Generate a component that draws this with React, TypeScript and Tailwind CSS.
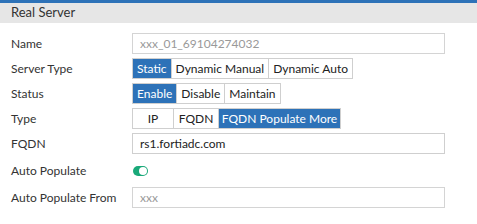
import React, { useState } from 'react';

const Seg = ({ items, active, widths }: { items: string[]; active: number; widths?: string[] }) => (
    <div className="flex h-[21px] border border-[#cfcfcf] whitespace-nowrap">
        {items.map((it, i) => (
            <div
                key={it}
                className={`flex items-center justify-center px-[4px] ${i > 0 ? 'border-l border-[#cfcfcf]' : ''} ${widths ? widths[i] : ''} ${i === active ? 'bg-[#2d72b8] text-white' : 'bg-white text-[#222]'}`}
            >
                {it}
            </div>
        ))}
    </div>
);

const Row = ({ label, h = 'h-[21px]', children }: { label: string; h?: string; children: React.ReactNode }) => (
    <div className={`flex items-center ${h}`}>
        <div className="w-[132px] pl-[11px] text-[#333] whitespace-nowrap">{label}</div>
        {children}
    </div>
);

export default function App() {
    const [auto, setAuto] = useState(true);
    return (
        <div className="w-[477px] h-[224px] bg-white text-[12px] font-['Lato','Liberation_Sans',sans-serif] overflow-hidden">
            <div className="border-t-[3px] border-[#2d72b8] bg-[#e6e6e6] h-[23px] flex items-center pl-[11px] text-[13px] text-[#333]">
                Real Server
            </div>
            <div className="flex flex-col gap-[4px] pt-[10px]">
                <Row label="Name">
                    <div className="w-[313px] h-[21px] border border-[#d4d4d4] flex items-center px-[7px] text-[#999]">
                        xxx_01_69104274032
                    </div>
                </Row>
                <Row label="Server Type">
                    <Seg items={['Static', 'Dynamic Manual', 'Dynamic Auto']} active={0} />
                </Row>
                <Row label="Status">
                    <Seg items={['Enable', 'Disable', 'Maintain']} active={0} />
                </Row>
                <Row label="Type">
                    <Seg items={['IP', 'FQDN', 'FQDN Populate More']} active={2} widths={['w-[40px]', 'w-[45px]', 'w-[122px]']} />
                </Row>
                <Row label="FQDN">
                    <div className="w-[313px] h-[21px] border border-[#cfcfcf] flex items-center px-[7px] text-[#222]">
                        rs1.fortiadc.com
                    </div>
                </Row>
                <Row label="Auto Populate" h="h-[25px]">
                    <button
                        onClick={() => setAuto(!auto)}
                        className={`ml-[1px] w-[15px] h-[10px] rounded-full relative ${auto ? 'bg-[#1aa979]' : 'bg-[#ccc]'}`}
                    >
                        <span className={`absolute top-[1px] w-[8px] h-[8px] rounded-full bg-white ${auto ? 'right-[1px]' : 'left-[1px]'}`} />
                    </button>
                </Row>
                <Row label="Auto Populate From">
                    <div className="w-[313px] h-[21px] border border-[#d4d4d4] flex items-center px-[7px] text-[#999]">
                        xxx
                    </div>
                </Row>
            </div>
        </div>
    );
}
